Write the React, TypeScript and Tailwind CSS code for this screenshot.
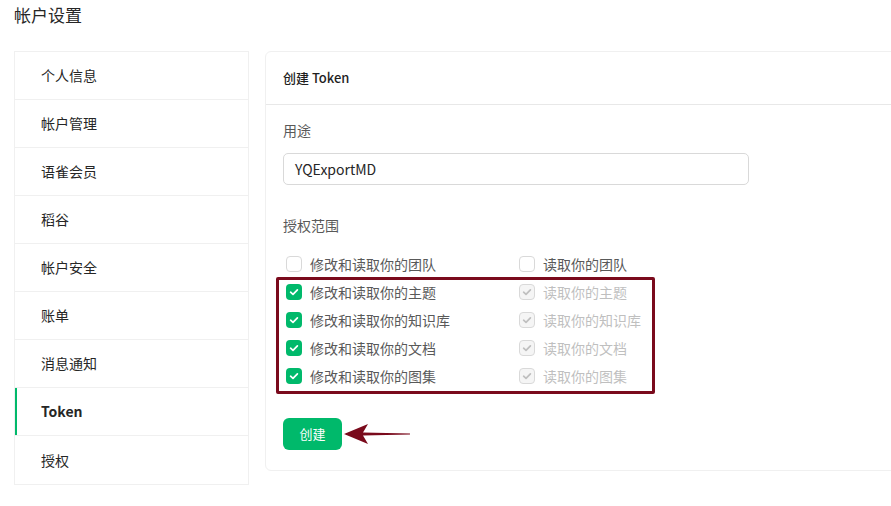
import { useState } from "react";

const menu = ["个人信息", "帐户管理", "语雀会员", "稻谷", "帐户安全", "账单", "消息通知", "Token", "授权"];

const scopes = [
  { write: "修改和读取你的团队", read: "读取你的团队", checked: false },
  { write: "修改和读取你的主题", read: "读取你的主题", checked: true },
  { write: "修改和读取你的知识库", read: "读取你的知识库", checked: true },
  { write: "修改和读取你的文档", read: "读取你的文档", checked: true },
  { write: "修改和读取你的图集", read: "读取你的图集", checked: true },
];

function Check({ checked, disabled }: { checked: boolean; disabled?: boolean }) {
  if (!checked) {
    return <span className="w-4 h-4 rounded-[4px] border border-[#d9d9d9] bg-white shrink-0" />;
  }
  return (
    <span
      className={
        disabled
          ? "w-4 h-4 rounded-[4px] border border-[#d9d9d9] bg-[#f5f5f5] shrink-0 flex items-center justify-center"
          : "w-4 h-4 rounded-[4px] bg-[#00b96b] shrink-0 flex items-center justify-center"
      }
    >
      <svg width="10" height="10" viewBox="0 0 10 10" fill="none">
        <path
          d="M1.6 5.2 L4 7.4 L8.4 2.8"
          stroke={disabled ? "#bfbfbf" : "#ffffff"}
          strokeWidth="1.7"
          strokeLinecap="round"
          strokeLinejoin="round"
        />
      </svg>
    </span>
  );
}

export default function App() {
  const [active] = useState("Token");

  return (
    <div
      className="w-[891px] h-[506px] overflow-hidden bg-white text-[#262626]"
      style={{ fontFamily: '"Microsoft YaHei", "Noto Sans CJK SC", "Noto Sans", sans-serif' }}
    >
      <div className="pl-[14px] pt-[3px] h-[51px] text-[17px] leading-[24px]">帐户设置</div>

      <div className="flex gap-[16px] pl-[14px]">
        {/* Side menu */}
        <div className="w-[235px] shrink-0 border border-[#f0f0f0] self-start">
          {menu.map((m, i) => (
            <div
              key={m}
              className={
                "relative h-[48px] flex items-center pl-[26px] text-[14px] " +
                (i < menu.length - 1 ? "border-b border-[#f0f0f0] " : "") +
                (m === active ? "font-semibold" : "")
              }
            >
              {m === active && <span className="absolute left-0 top-0 bottom-0 w-[2px] bg-[#00b96b]" />}
              {m}
            </div>
          ))}
        </div>

        {/* Token card */}
        <div className="w-[660px] shrink-0 h-[420px] border border-[#f0f0f0] rounded-[6px]">
          <div className="h-[53px] flex items-center px-[17px] border-b border-[#e8e8e8] text-[13px] font-medium text-[#1f1f1f]">
            创建 Token
          </div>
          <div className="relative px-[17px] pt-[15px]">
            <div className="text-[14px] text-[#595959] leading-[20px]">用途</div>
            <div className="mt-[13px] w-[466px] h-[32px] border border-[#d9d9d9] rounded-[5px] flex items-center px-[11px] text-[14px]">
              YQExportMD
            </div>

            <div className="mt-[30px] text-[14px] text-[#595959] leading-[20px]">授权范围</div>

            <div className="mt-[15px] flex flex-col">
              {scopes.map((s) => (
                <div key={s.write} className="h-[28px] flex items-center text-[14px]">
                  <div className="w-[236px] pl-[3px] flex items-center gap-[8px] text-[#595959]">
                    <Check checked={s.checked} />
                    {s.write}
                  </div>
                  <div className="flex items-center gap-[8px] text-[#595959]">
                    <Check checked={s.checked} disabled={s.checked} />
                    <span className={s.checked ? "text-[#bfbfbf]" : ""}>{s.read}</span>
                  </div>
                </div>
              ))}
            </div>

            <div className="mt-[28px] flex items-center">
              <button className="w-[59px] h-[32px] rounded-[6px] bg-[#00b96b] text-white text-[13px]">创建</button>
              <svg width="70" height="24" viewBox="0 0 70 24" className="ml-[1px]">
                <path d="M1 12 L25 2 L20 10.5 L67 11.6 L67 12.6 L20 13.5 L25 22 Z" fill="#7a0a1c" />
              </svg>
            </div>

            {/* annotation box */}
            <div className="absolute left-[10px] top-[172px] w-[379px] h-[117px] border-[3px] border-[#7a0a1c] rounded-[2px] pointer-events-none" />
          </div>
        </div>
      </div>
    </div>
  );
}
